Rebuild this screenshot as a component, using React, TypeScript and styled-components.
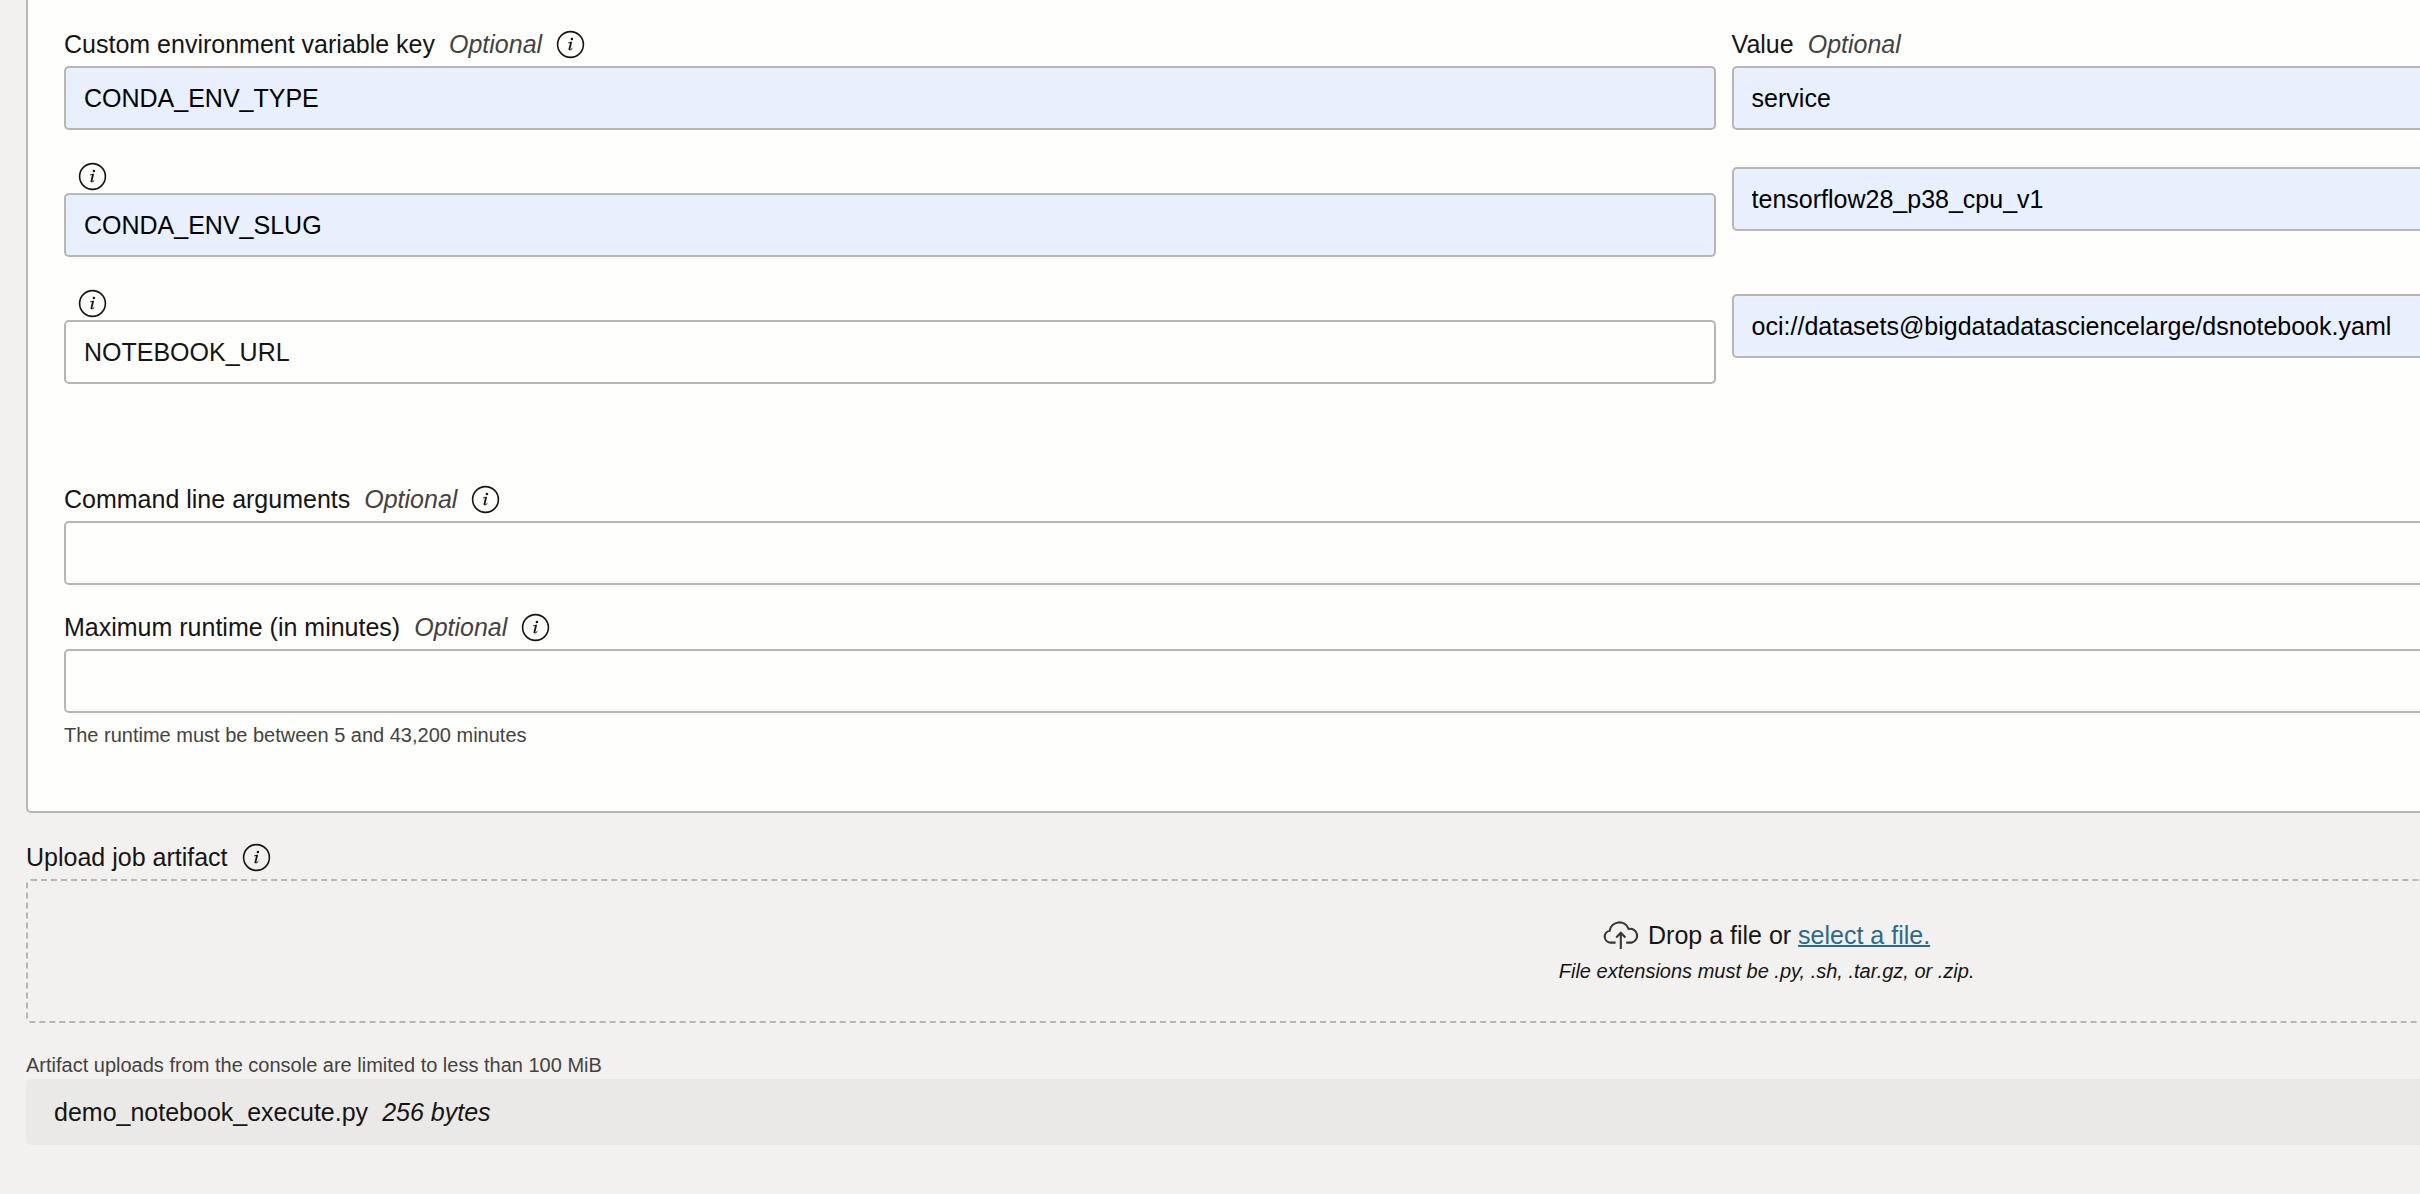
import React, { useId } from "react";
import styled, { createGlobalStyle } from "styled-components";

const GlobalStyle = createGlobalStyle`
  * { box-sizing: border-box; }
  body {
    margin: 0;
    background: #f3f1f0;
    color: #161513;
    font-family: "Helvetica Neue", "Liberation Sans", Arial, sans-serif;
    font-size: 25px;
    line-height: 32px;
  }
`;

const Viewport = styled.div`
  overflow: hidden;
`;

const Page = styled.main`
  width: 146%;
  padding: 0 26px 48px;
`;

const Panel = styled.section`
  padding: 28px 36px 62px;
  border: 2px solid #bab5b0;
  border-top: 0;
  border-radius: 0 0 5px 5px;
  background: #fefefd;
`;

const VariableList = styled.div`
  display: grid;
  gap: 25px;
  margin-bottom: 99px;
`;

const VariableRow = styled.div`
  display: grid;
  grid-template-columns: 1fr 1fr 70px;
  column-gap: 16px;
`;

const FieldStack = styled.div`
  display: grid;
  gap: 26px;
`;

const Field = styled.div<{ $inset?: boolean }>`
  display: flex;
  flex-direction: column;
  padding-top: ${(p) => (p.$inset ? "12px" : "0")};
`;

const LabelRow = styled.div<{ $iconOnly?: boolean }>`
  display: flex;
  align-items: center;
  height: 38px;
  padding: ${(p) => (p.$iconOnly ? "6px 0 2px" : "0 0 6px")};
`;

const Label = styled.label`
  white-space: pre;
`;

const Optional = styled.em`
  margin-left: 14px;
  color: #444240;
`;

const InfoButton = styled.button`
  display: flex;
  margin: 0 0 0 14px;
  padding: 0;
  border: 0;
  background: none;
  color: #161513;
`;

const TextInput = styled.input<{ $filled?: boolean }>`
  width: 100%;
  height: 64px;
  padding: 0 18px;
  border: 2px solid #bab5b0;
  border-radius: 5px;
  background: ${(p) => (p.$filled ? "#e8effd" : "#fefefd")};
  color: ${(p) => (p.$filled ? "#000" : "#161513")};
  font: inherit;
  outline: none;
`;

const Hint = styled.p`
  margin: 0;
  padding-top: 8px;
  color: #444240;
  font-size: 20px;
  line-height: 28px;
`;

const Upload = styled.section`
  padding-top: 28px;
`;

const DropZone = styled.div`
  display: flex;
  flex-direction: column;
  align-items: center;
  justify-content: center;
  height: 144px;
  margin-bottom: 20px;
  padding-top: 4px;
  border: 2px dashed #bab5b0;
  border-radius: 5px;
`;

const DropPrompt = styled.div`
  display: flex;
  align-items: center;
  gap: 8px;
`;

const FileLink = styled.a`
  color: #2c6a8c;
  text-decoration: underline;
  text-decoration-thickness: 2px;
`;

const Extensions = styled.em`
  padding-top: 4px;
  font-size: 20px;
  line-height: 32px;
`;

const FileItem = styled.div`
  display: flex;
  align-items: center;
  gap: 14px;
  height: 66px;
  padding: 0 28px;
  border-radius: 5px;
  background: #ebe9e8;
`;

function Info() {
  return (
    <InfoButton type="button" aria-label="More information">
      <svg width="29" height="29" viewBox="0 0 29 29" fill="none" aria-hidden="true">
        <circle cx="14.5" cy="14.5" r="12.9" stroke="currentColor" strokeWidth="1.6" />
        <circle cx="15.9" cy="9" r="1.3" fill="currentColor" />
        <path d="M12.2 12.9 L15.8 12.2 M13.4 19.6 Q14.6 20.6 16.4 18.3" stroke="currentColor" strokeWidth="1" />
        <path d="M15 12.7 L13.4 19.3" stroke="currentColor" strokeWidth="1.8" strokeLinecap="round" />
      </svg>
    </InfoButton>
  );
}

function CloudUpload() {
  return (
    <svg width="37" height="30" viewBox="0 0 37 30" fill="none" stroke="#393735" strokeWidth="2.1" aria-hidden="true">
      <path d="M12.6 22.6 H7.4 A6 6 0 0 1 6.7 10.7 A9.8 9.8 0 0 1 25.6 8.9 A7 7 0 1 1 28.6 22.6 H23.2" />
      <path d="M17.8 29 V13 M13.2 17.4 L17.8 12.8 L22.4 17.4" />
    </svg>
  );
}

interface TextFieldProps {
  label?: string;
  name: string;
  value?: string;
  filled?: boolean;
  info?: boolean;
  hint?: string;
}

function TextField({ label, name, value = "", filled, info, hint }: TextFieldProps) {
  const id = useId();
  return (
    <Field $inset={!label && !info}>
      {(label || info) && (
        <LabelRow $iconOnly={!label}>
          {label && (
            <Label htmlFor={id}>
              {label}
              <Optional>Optional</Optional>
            </Label>
          )}
          {info && <Info />}
        </LabelRow>
      )}
      <TextInput id={id} aria-label={label ? undefined : name} name={name} defaultValue={value} $filled={filled} />
      {hint && <Hint>{hint}</Hint>}
    </Field>
  );
}

const variables = [
  { key: "CONDA_ENV_TYPE", value: "service", keyFilled: true },
  { key: "CONDA_ENV_SLUG", value: "tensorflow28_p38_cpu_v1", keyFilled: true },
  { key: "NOTEBOOK_URL", value: "oci://datasets@bigdatadatasciencelarge/dsnotebook.yaml", keyFilled: false },
];

export default function App() {
  return (
    <Viewport>
      <GlobalStyle />
      <Page>
        <Panel>
          <VariableList>
            {variables.map((v, i) => (
              <VariableRow key={v.key}>
                <TextField
                  name={`key-${i}`}
                  label={i === 0 ? "Custom environment variable key" : undefined}
                  value={v.key}
                  filled={v.keyFilled}
                  info
                />
                <TextField name={`value-${i}`} label={i === 0 ? "Value" : undefined} value={v.value} filled />
              </VariableRow>
            ))}
          </VariableList>
          <FieldStack>
            <TextField name="arguments" label="Command line arguments" info />
            <TextField
              name="runtime"
              label="Maximum runtime (in minutes)"
              info
              hint="The runtime must be between 5 and 43,200 minutes"
            />
          </FieldStack>
        </Panel>
        <Upload>
          <LabelRow>
            <span>Upload job artifact</span>
            <Info />
          </LabelRow>
          <DropZone>
            <DropPrompt>
              <CloudUpload />
              <span>
                Drop a file or <FileLink href="#select">select a file.</FileLink>
              </span>
            </DropPrompt>
            <Extensions>File extensions must be .py, .sh, .tar.gz, or .zip.</Extensions>
          </DropZone>
          <Hint>Artifact uploads from the console are limited to less than 100 MiB</Hint>
          <FileItem>
            <span>demo_notebook_execute.py</span>
            <em>256 bytes</em>
          </FileItem>
        </Upload>
      </Page>
    </Viewport>
  );
}
